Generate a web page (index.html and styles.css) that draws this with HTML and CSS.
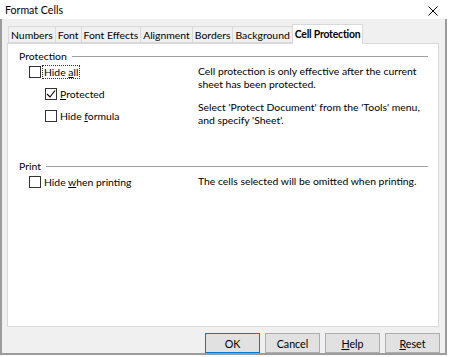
FILE: index.html
```html
<!DOCTYPE html>
<html lang="en">
  <head>
    <meta charset="UTF-8" />
    <title>Format Cells</title>
    <link rel="stylesheet" href="styles.css">
  </head>
  <body>
    <div class="dialog">
      <div class="titlebar">
        <span class="title">Format Cells</span>
        <svg class="close" width="10" height="10" viewBox="0 0 10 10">
          <path d="M0.5 0.5 L9.5 9.5 M9.5 0.5 L0.5 9.5" stroke="#000" stroke-width="1" fill="none" />
        </svg>
      </div>
      <div class="frame">
        <div class="tabs">
          <div class="tab">Numbers</div>
          <div class="tab">Font</div>
          <div class="tab">Font Effects</div>
          <div class="tab">Alignment</div>
          <div class="tab">Borders</div>
          <div class="tab">Background</div>
          <div class="tab active">Cell Protection</div>
        </div>
        <div class="panel">
          <div class="section-head">
            <span>Protection</span>
            <div class="rule"></div>
          </div>
          <div class="section protection">
            <div class="checks">
              <div class="check">
                <span class="box"></span>
                <span class="label focus">Hide <u>a</u>ll</span>
              </div>
              <div class="check sub">
                <span class="box">
                  <svg width="10" height="10" viewBox="0 0 10 10">
                    <path d="M1 5 L4 8 L9 1.5" stroke="#000" stroke-width="1.1" fill="none" />
                  </svg>
                </span>
                <span class="label"><u>P</u>rotected</span>
              </div>
              <div class="check sub">
                <span class="box"></span>
                <span class="label">Hide <u>f</u>ormula</span>
              </div>
            </div>
            <div class="notes">
              <p>Cell protection is only effective after the current<br>sheet has been protected.</p>
              <p>Select 'Protect Document' from the 'Tools' menu,<br>and specify 'Sheet'.</p>
            </div>
          </div>
          <div class="section-head print-head">
            <span>Print</span>
            <div class="rule"></div>
          </div>
          <div class="section">
            <div class="checks">
              <div class="check">
                <span class="box"></span>
                <span class="label">Hide <u>w</u>hen printing</span>
              </div>
            </div>
            <div class="notes">
              <p>The cells selected will be omitted when printing.</p>
            </div>
          </div>
        </div>
        <div class="buttons">
          <button class="default">OK</button>
          <button>Cancel</button>
          <button><u>H</u>elp</button>
          <button><u>R</u>eset</button>
        </div>
      </div>
    </div>
  </body>
</html>
```

FILE: styles.css
```css
body {
  margin: 0;
  background: #fff;
  font-family: Lato, "Open Sans", sans-serif;
  font-size: 10.4px;
  color: #000;
}
.dialog {
  width: 447px;
  height: 355px;
  display: flex;
  flex-direction: column;
}
.titlebar {
  height: 19px;
  background: #fff;
  display: flex;
  align-items: center;
  justify-content: space-between;
  padding: 0 9px 0 5px;
}
.title {
  font-size: 10.6px;
}
.close {
  margin-top: 3px;
}
.frame {
  flex: 1;
  background: #f0f0f0;
  border-left: 2px solid #9c9c9c;
  border-right: 2px solid #9c9c9c;
  border-bottom: 2px solid #9c9c9c;
  padding: 5px 5px 0 5px;
  display: flex;
  flex-direction: column;
}
.tabs {
  display: flex;
  align-items: flex-end;
  height: 20px;
  padding-left: 1px;
  position: relative;
  z-index: 1;
}
.tab {
  height: 17px;
  line-height: 16px;
  padding: 0 2px;
  border: 1px solid #d9d9d9;
  border-right: none;
  box-sizing: border-box;
  background: #f0f0f0;
  margin-bottom: 1px;
}
.tab.active {
  height: 20px;
  margin-bottom: 0;
  background: #fff;
  font-weight: bold;
  letter-spacing: -0.2px;
  border-right: 1px solid #d9d9d9;
  border-bottom: none;
  padding: 1px 2px 0;
}
.panel {
  height: 284px;
  margin-top: -1px;
  margin-right: 1px;
  box-sizing: border-box;
  background: #fff;
  border: 1px solid #d9d9d9;
  padding: 6px 10px 0 11px;
}
.section-head {
  display: flex;
  align-items: center;
  gap: 5px;
  height: 12px;
}
.rule {
  flex: 1;
  height: 1px;
  background: #a0a0a0;
}
.print-head {
  margin-top: 23px;
}
.section {
  display: flex;
  margin-top: 3px;
}
.checks {
  width: 179px;
  padding-left: 10px;
  box-sizing: border-box;
  flex-shrink: 0;
}
.check {
  display: flex;
  align-items: center;
  height: 14px;
}
.check.sub {
  margin-top: 8px;
  padding-left: 16px;
}
.box {
  width: 10px;
  height: 10px;
  border: 1px solid #333;
  background: #fff;
  display: flex;
  align-items: center;
  justify-content: center;
  flex-shrink: 0;
}
.label {
  margin-left: 1px;
  padding: 0 1px;
  line-height: 12px;
  border: 1px solid transparent;
}
.label.focus {
  border: 1px dotted #333;
}
.notes p {
  margin: 0 0 10px;
  line-height: 13px;
}
.buttons {
  display: flex;
  justify-content: flex-end;
  gap: 5px;
  margin-top: 6px;
}
button {
  width: 55px;
  height: 20px;
  font-family: inherit;
  font-size: 10.7px;
  background: #e1e1e1;
  border: 1px solid #adadad;
  padding: 0;
  color: #000;
}
button.default {
  border-color: #0078d7;
}
```
